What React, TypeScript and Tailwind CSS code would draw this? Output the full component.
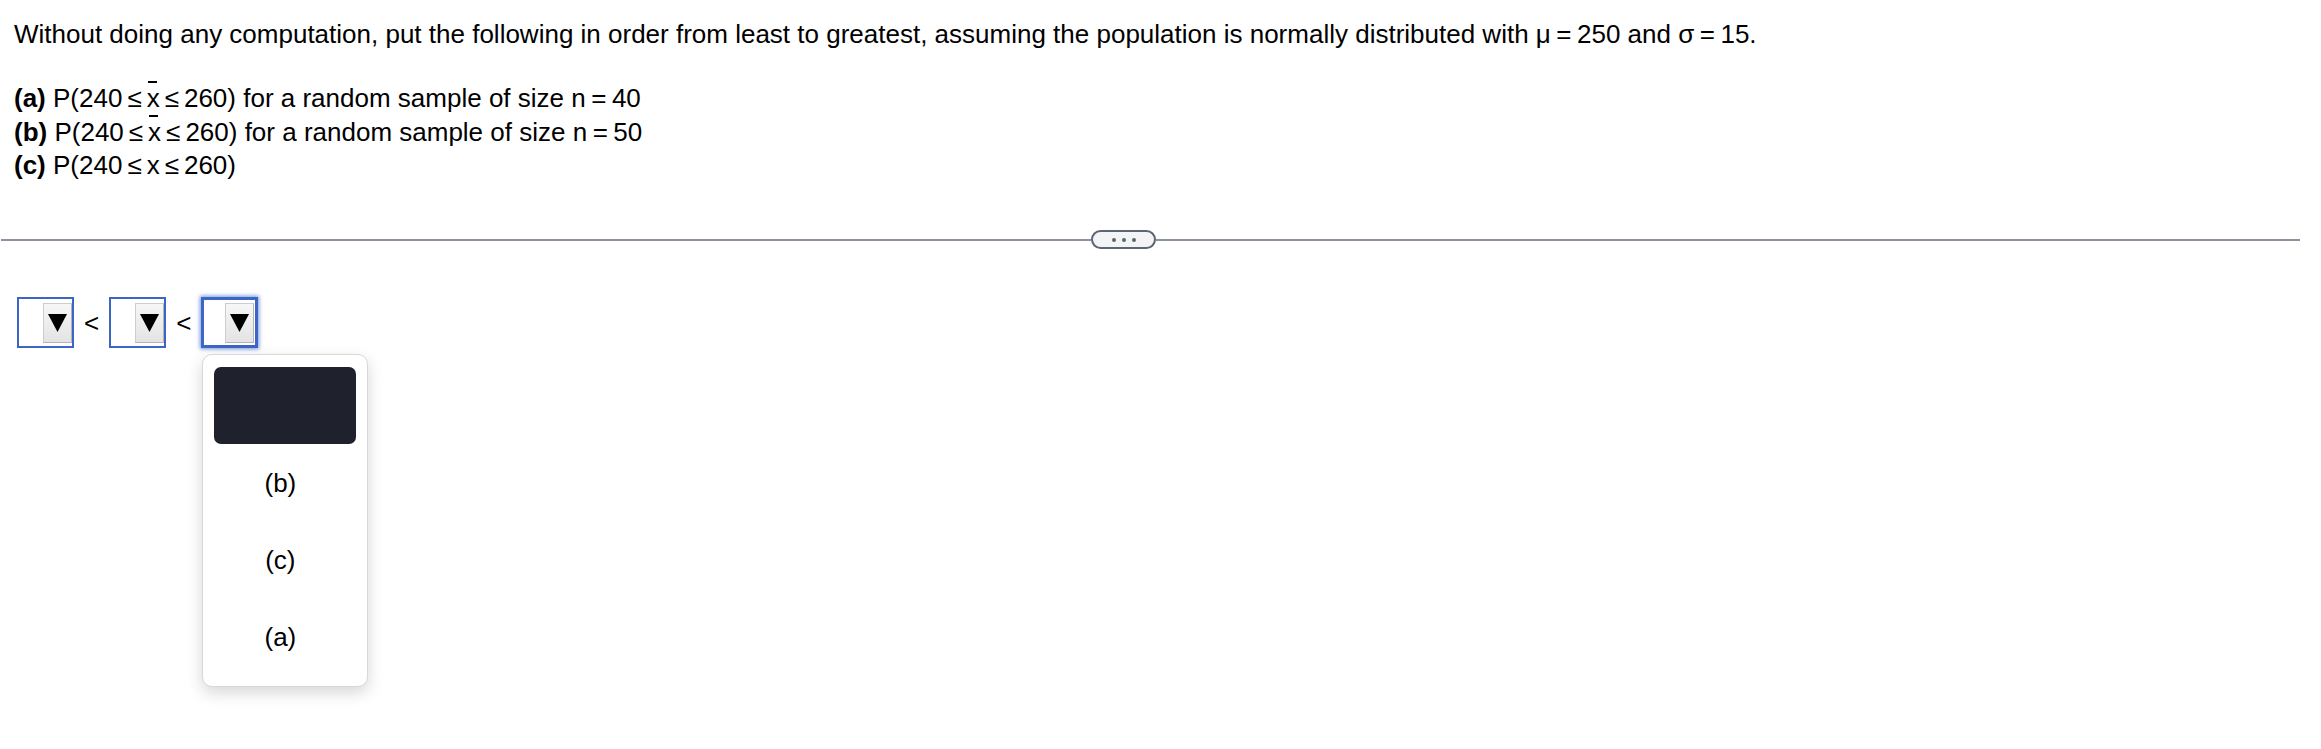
import React from 'react';

function XBar() {
  return (
    <span className="relative">
      x
      <span className="absolute left-[1px] top-[-2px] w-[9px] h-[2px] bg-black" />
    </span>
  );
}

function Le() {
  return <span className="mx-[5px]">≤</span>;
}

function Eq() {
  return <span className="mx-[5.5px]">=</span>;
}

function DropButton() {
  return (
    <div className="w-[29px] h-[40px] flex items-center justify-center bg-gradient-to-b from-[#f7f7f7] to-[#e4e4e4] border border-[#cdcdcd] border-r-[#b4b4b4] border-b-[#b4b4b4]">
      <svg width="19" height="18" viewBox="0 0 19 18">
        <polygon points="0,0 19,0 9.5,18" fill="#000" />
      </svg>
    </div>
  );
}

function Lt() {
  return <span className="mx-[10px] leading-none">&lt;</span>;
}

const options = ['', '(b)', '(c)', '(a)'];

export default function App() {
  return (
    <div className="min-h-[749px] w-full bg-white text-black text-[26px] font-['Liberation_Sans',Arial,sans-serif]">
      <p className="pl-[14px] pt-[17px] leading-[34px]">
        Without doing any computation, put the following in order from least to greatest, assuming the
        population is normally distributed with μ<Eq />250 and σ<Eq />15.
      </p>

      <div className="pl-[14px] mt-[31px] leading-[33.5px]">
        <p>
          <b>(a)</b> P(240<Le /><XBar /><Le />260) for a random sample of size n<Eq />40
        </p>
        <p>
          <b>(b)</b> P(240<Le /><XBar /><Le />260) for a random sample of size n<Eq />50
        </p>
        <p>
          <b>(c)</b> P(240<Le />x<Le />260)
        </p>
      </div>

      <div className="ml-[1px] w-[2299px] mt-[47.5px] h-[19px] flex items-center">
        <div className="w-[1090px] h-[2px] bg-[#8a939f]" />
        <div className="w-[65px] h-[19px] rounded-full border-2 border-[#5b6573] bg-[#f3f4f6] flex items-center justify-center gap-[6px]">
          <span className="w-[4px] h-[4px] rounded-full bg-[#5b6573]" />
          <span className="w-[4px] h-[4px] rounded-full bg-[#5b6573]" />
          <span className="w-[4px] h-[4px] rounded-full bg-[#5b6573]" />
        </div>
        <div className="flex-1 h-[2px] bg-[#8a939f]" />
      </div>

      <div className="pl-[17px] mt-[48px] flex items-center">
        <div className="w-[57px] h-[51px] border-2 border-[#3b66c5] flex items-center justify-end">
          <DropButton />
        </div>
        <Lt />
        <div className="w-[57px] h-[51px] border-2 border-[#3b66c5] flex items-center justify-end">
          <DropButton />
        </div>
        <Lt />
        <div className="relative">
          <div className="w-[57px] h-[51px] border-[3px] border-[#3b66c5] shadow-[0_0_4px_1px_rgba(59,102,197,0.7)] flex items-center justify-end pr-[1px]">
            <DropButton />
          </div>
          <div className="absolute left-[1px] top-[57px] w-[166px] h-[333px] rounded-[10px] border-[1.5px] border-[#d8d8d8] bg-white shadow-[0_6px_16px_rgba(0,0,0,0.16)] px-[11px] pt-[12px] pb-[11px] flex flex-col">
            {options.map((o, i) => (
              <div
                key={i}
                className={
                  i === 0
                    ? 'h-[77px] rounded-[7px] bg-[#1f222d]'
                    : 'h-[77px] flex items-center justify-center pr-[10px] leading-none'
                }
              >
                {o}
              </div>
            ))}
          </div>
        </div>
      </div>
    </div>
  );
}
